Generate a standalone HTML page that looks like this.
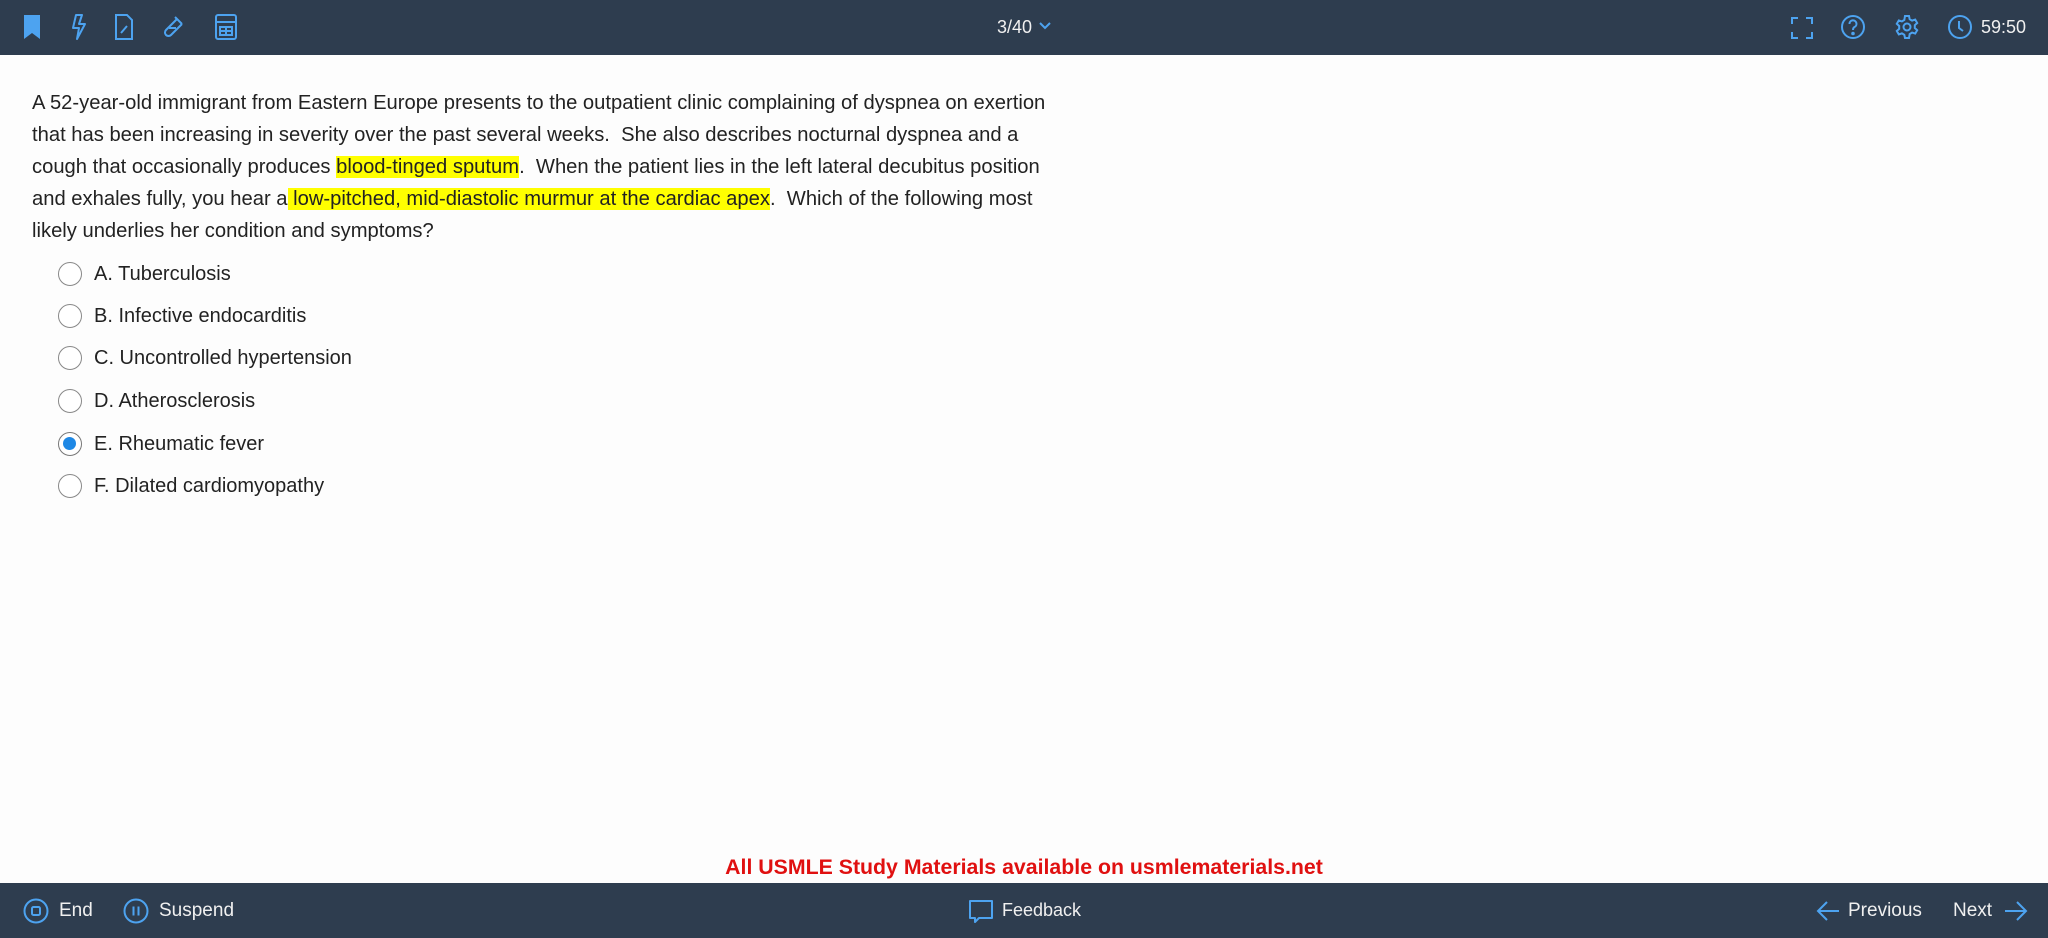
<!DOCTYPE html>
<html><head><meta charset="utf-8"><style>
*{margin:0;padding:0;box-sizing:border-box}
body{width:2048px;height:938px;background:#fdfdfd;font-family:"Liberation Sans",Arial,sans-serif;position:relative;overflow:hidden;color:#222}
.bar{position:absolute;left:0;width:2048px;height:55px;background:#2e3d4f;color:#f2f2f2}
.top{top:0}.bot{top:883px}
.ic{position:absolute}
.t{position:absolute;font-size:19px;color:#f0f0f0}
.q{position:absolute;left:32px;top:87px;width:1100px;font-size:20.2px;line-height:32px;color:#222}
.hl{background:#ffff00}
.opt{position:absolute;left:58px;font-size:20px;color:#222;height:26px;line-height:26px}
.opt .r{position:absolute;left:0;top:1px;width:24px;height:24px;border:1.5px solid #888;border-radius:50%;background:#fff}
.opt span{position:absolute;left:36px;white-space:nowrap}
.sel .r{border-color:#777}
.sel .r:after{content:"";position:absolute;left:4px;top:4px;width:13px;height:13px;border-radius:50%;background:#1e88e5}
.red{position:absolute;left:0;width:2048px;top:855px;text-align:center;color:#e01010;font-weight:bold;font-size:21.3px}
</style></head><body>
<div class="bar top">
<svg class="ic" style="left:22px;top:14px" width="20" height="26" viewBox="0 0 20 26"><path d="M2 1h16v24l-8-6-8 6z" fill="#4da3f0"/></svg>
<svg class="ic" style="left:68px;top:13px" width="20" height="28" viewBox="0 0 20 28" fill="none" stroke="#4da3f0" stroke-width="2" stroke-linejoin="round"><path d="M8 2L5 15h6l-2 11 8-15h-6l3-9z"/></svg>
<svg class="ic" style="left:113px;top:13px" width="22" height="28" viewBox="0 0 22 28" fill="none" stroke="#4da3f0" stroke-width="2"><path d="M3 2h11l5 5v19H3z"/><path d="M8 20l6-7"/></svg>
<svg class="ic" style="left:160px;top:14px" width="26" height="26" viewBox="0 0 26 26" fill="none" stroke="#4da3f0" stroke-width="2"><path d="M15 3l7 7M17 5L6 16a3.5 3.5 0 0 0 5 5l11-11M9 14h7"/></svg>
<svg class="ic" style="left:214px;top:13px" width="24" height="28" viewBox="0 0 24 28" fill="none" stroke="#4da3f0" stroke-width="2"><rect x="2" y="2" width="20" height="24" rx="2"/><path d="M2 9h20M6 14h12v8H6zM12 14v8M6 18h12"/></svg>
<div class="t" style="left:997px;top:17px;font-size:18px">3/40</div>
<svg class="ic" style="left:1038px;top:21px" width="14" height="10" viewBox="0 0 14 10" fill="none" stroke="#4da3f0" stroke-width="2"><path d="M2 2l5 5 5-5"/></svg>
<svg class="ic" style="left:1790px;top:16px" width="24" height="24" viewBox="0 0 24 24" fill="none" stroke="#4da3f0" stroke-width="2"><path d="M2 8V2h6M16 2h6v6M22 16v6h-6M8 22H2v-6"/></svg>
<svg class="ic" style="left:1840px;top:14px" width="26" height="26" viewBox="0 0 26 26" fill="none" stroke="#4da3f0" stroke-width="2"><circle cx="13" cy="13" r="11"/><path d="M9.5 10a3.5 3.5 0 1 1 5 3c-1.3.7-1.5 1.5-1.5 3"/><circle cx="13" cy="19.5" r=".8" fill="#4da3f0"/></svg>
<svg class="ic" style="left:1894px;top:14px" width="26" height="26" viewBox="0 0 26 26" fill="none" stroke="#4da3f0" stroke-width="2"><path d="M11 2h4l.7 3.2 2.4 1.4 3.1-1 2 3.4-2.4 2.2v2.8l2.4 2.2-2 3.4-3.1-1-2.4 1.4L15 24h-4l-.7-3.2-2.4-1.4-3.1 1-2-3.4 2.4-2.2v-2.8L2.8 9.8l2-3.4 3.1 1 2.4-1.4z"/><circle cx="13" cy="13" r="3.5"/></svg>
<svg class="ic" style="left:1947px;top:14px" width="26" height="26" viewBox="0 0 26 26" fill="none" stroke="#4da3f0" stroke-width="2"><circle cx="13" cy="13" r="11"/><path d="M12 7v7l4 3"/></svg>
<div class="t" style="left:1981px;top:17px;font-size:18px">59:50</div>
</div>

<div class="q">A 52-year-old immigrant from Eastern Europe presents to the outpatient clinic complaining of dyspnea on exertion<br>that has been increasing in severity over the past several weeks.&nbsp; She also describes nocturnal dyspnea and a<br>cough that occasionally produces <span class="hl">blood-tinged sputum</span>.&nbsp; When the patient lies in the left lateral decubitus position<br>and exhales fully, you hear a<span class="hl"> low-pitched, mid-diastolic murmur at the cardiac apex</span>.&nbsp; Which of the following most<br>likely underlies her condition and symptoms?</div>

<div class="opt" style="top:261px"><div class="r"></div><span>A. Tuberculosis</span></div>
<div class="opt" style="top:303px"><div class="r"></div><span>B. Infective endocarditis</span></div>
<div class="opt" style="top:345px"><div class="r"></div><span>C. Uncontrolled hypertension</span></div>
<div class="opt" style="top:388px"><div class="r"></div><span>D. Atherosclerosis</span></div>
<div class="opt sel" style="top:431px"><div class="r"></div><span>E. Rheumatic fever</span></div>
<div class="opt" style="top:473px"><div class="r"></div><span>F. Dilated cardiomyopathy</span></div>

<div class="red">All USMLE Study Materials available on usmlematerials.net</div>

<div class="bar bot">
<svg class="ic" style="left:23px;top:15px" width="26" height="26" viewBox="0 0 26 26" fill="none" stroke="#4da3f0" stroke-width="2"><circle cx="13" cy="13" r="11.5"/><rect x="9" y="9" width="8" height="8" rx="1.5"/></svg>
<div class="t" style="left:59px;top:17px">End</div>
<svg class="ic" style="left:123px;top:15px" width="26" height="26" viewBox="0 0 26 26" fill="none" stroke="#4da3f0" stroke-width="2"><circle cx="13" cy="13" r="11.5"/><path d="M10.5 8.5v9M15.5 8.5v9"/></svg>
<div class="t" style="left:159px;top:17px">Suspend</div>
<svg class="ic" style="left:968px;top:16px" width="26" height="26" viewBox="0 0 26 26" fill="none" stroke="#4da3f0" stroke-width="2" stroke-linejoin="round"><path d="M2 2h22v17H11l-4 4v-4H2z"/></svg>
<div class="t" style="left:1002px;top:17px;font-size:18px">Feedback</div>
<svg class="ic" style="left:1815px;top:16px" width="26" height="24" viewBox="0 0 26 24" fill="none" stroke="#4da3f0" stroke-width="2"><path d="M24 12H3M12 3l-9 9 9 9"/></svg>
<div class="t" style="left:1848px;top:17px">Previous</div>
<div class="t" style="left:1953px;top:17px">Next</div>
<svg class="ic" style="left:2003px;top:16px" width="26" height="24" viewBox="0 0 26 24" fill="none" stroke="#4da3f0" stroke-width="2"><path d="M2 12h21M14 3l9 9-9 9"/></svg>
</div>
</body></html>
